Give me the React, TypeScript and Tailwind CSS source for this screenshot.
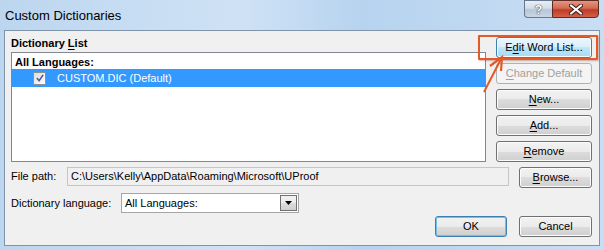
const font = "font-['Liberation_Sans',Arial,sans-serif]";

const btnBase =
  "flex items-center justify-center rounded-[3px] border text-[11px] leading-none";
const btnNormal =
  "border-[#707070] bg-[linear-gradient(#f2f2f2_0%,#ebebeb_50%,#dddddd_50%,#cfcfcf_100%)] shadow-[inset_0_0_0_1px_#fcfcfc] text-black";
const btnHot =
  "border-[#3c7fb1] bg-[linear-gradient(#eaf6fd_0%,#d9f0fc_50%,#bee6fd_50%,#a7d9f5_100%)] shadow-[inset_0_0_0_1px_#fcfcfc] text-black";
const btnDefault =
  "border-[#3c7fb1] bg-[linear-gradient(#f2f2f2_0%,#ebebeb_50%,#dddddd_50%,#cfcfcf_100%)] shadow-[inset_0_0_0_1px_#70c0e7] text-black";
const btnDisabled = "border-[#adb2b5] bg-[#f4f4f4] text-[#a0a0a0]";

function Btn({
  children,
  cls,
  kind = "normal",
}: {
  children: React.ReactNode;
  cls: string;
  kind?: "normal" | "hot" | "default" | "disabled";
}) {
  const k =
    kind === "hot" ? btnHot : kind === "default" ? btnDefault : kind === "disabled" ? btnDisabled : btnNormal;
  return <div className={`${btnBase} ${k} ${cls}`}>{children}</div>;
}

function U({ children }: { children: React.ReactNode }) {
  return <span className="underline underline-offset-[2px]">{children}</span>;
}

function Checkbox() {
  return (
    <div className="flex h-[13px] w-[13px] items-center justify-center border border-[#8f8f8f] bg-[linear-gradient(135deg,#dcdcdc,#ffffff)]">
      <svg width="8" height="8" viewBox="0 0 9 9">
        <path d="M1 4.5 L3.5 7.5 L8 1" fill="none" stroke="#4a5c96" strokeWidth="1.8" />
      </svg>
    </div>
  );
}

export default function App() {
  return (
    <div className={`relative flex h-[250px] w-[604px] flex-col bg-[linear-gradient(90deg,#bcd6ef_0%,#cfe2f5_40%,#b7d3ef_60%,#c9def3_100%)] ${font}`}>
      {/* title bar */}
      <div className="flex h-[30px] shrink-0">
        <div className="pl-[5px] pt-[8px] text-[13px] leading-[15px] text-black">Custom Dictionaries</div>
        <div className="ml-auto mr-[5px] flex self-start">
          <div className="flex h-[18px] w-[28px] items-center justify-center rounded-bl-[4px] border border-r-0 border-[#66778f] bg-[linear-gradient(#e9eef5_0%,#d3dde9_45%,#b7c6d8_55%,#c9d6e5_100%)] text-[13px] font-bold leading-none text-white [text-shadow:0_0_1px_#222,0_0_1px_#222]">
            ?
          </div>
          <div className="flex h-[18px] w-[47px] items-center justify-center rounded-br-[4px] border border-[#5e2a22] bg-[linear-gradient(#e39684_0%,#d26a52_45%,#c03c25_55%,#d2604a_100%)]">
            <svg width="14" height="11" viewBox="0 0 14 11">
              <path d="M2 1.5 L12 9.5 M12 1.5 L2 9.5" stroke="#3a1a14" strokeWidth="4" strokeLinecap="round" />
              <path d="M2 1.5 L12 9.5 M12 1.5 L2 9.5" stroke="#ffffff" strokeWidth="2.2" strokeLinecap="round" />
            </svg>
          </div>
        </div>
      </div>

      {/* client area */}
      <div className="mx-[4px] flex h-[216px] flex-col border border-[#7f93aa] bg-[#f0f0f0] pl-[6px] pr-[7px] text-[11px] text-black">
        <div className="flex gap-[10px]">
          <div className="flex w-[475px] flex-col">
            <div className="h-[21px] pt-[5px] font-bold leading-[14px]">
              Dictionary <U>L</U>ist
            </div>
            <div className="h-[110px] border border-[#828790] bg-white">
              <div className="h-[16px] pl-[3px] pt-[2px] font-bold leading-[14px]">All Languages:</div>
              <div className="flex h-[18px] items-center bg-[#3399ff] pl-[21px] text-white">
                <Checkbox />
                <span className="ml-[11px]">CUSTOM.DIC (Default)</span>
              </div>
            </div>
          </div>
          <div className="flex w-[96px] flex-col gap-[5px] pt-[6px]">
            <Btn cls="h-[21px]" kind="hot">
              E<U>d</U>it Word List...
            </Btn>
            <Btn cls="h-[21px]" kind="disabled">
              <U>C</U>hange Default
            </Btn>
            <Btn cls="h-[21px]">
              <U>N</U>ew...
            </Btn>
            <Btn cls="h-[21px]">
              <U>A</U>dd...
            </Btn>
            <Btn cls="h-[21px]">
              <U>R</U>emove
            </Btn>
          </div>
        </div>

        <div className="mt-[5px] flex items-start">
          <div className="flex h-[19px] w-[56px] items-center">File path:</div>
          <div className="flex h-[19px] w-[442px] items-center border border-[#c3c6cb] bg-[#f0f0f0] pl-[3px]">
            C:\Users\Kelly\AppData\Roaming\Microsoft\UProof
          </div>
          <Btn cls="ml-[10px] h-[21px] w-[73px]">
            <U>B</U>rowse...
          </Btn>
        </div>

        <div className="mt-[5px] flex items-center">
          <div className="w-[110px]">Dictionary language:</div>
          <div className="flex h-[20px] w-[178px] items-center border border-[#a5a5a5] bg-white pl-[3px]">
            <span>All Languages:</span>
            <div className="ml-auto mr-[1px] flex h-[16px] w-[17px] items-center justify-center border border-[#707070] bg-[linear-gradient(#f2f2f2_0%,#ebebeb_50%,#dddddd_50%,#cfcfcf_100%)]">
              <svg width="7" height="4" viewBox="0 0 7 4">
                <path d="M0 0 H7 L3.5 4 Z" fill="#000" />
              </svg>
            </div>
          </div>
        </div>

        <div className="mt-[3px] flex justify-end gap-[12px]">
          <Btn cls="h-[21px] w-[72px]" kind="default">
            OK
          </Btn>
          <Btn cls="h-[21px] w-[73px]">Cancel</Btn>
        </div>
      </div>

      {/* annotation overlay */}
      <div className="pointer-events-none absolute left-[478px] top-[35px] h-[25px] w-[120px] rounded-[1px] border-2 border-[#e35a2a] shadow-[1px_1px_2px_rgba(120,40,10,0.35)]" />
      <svg className="pointer-events-none absolute left-[478px] top-[54px]" width="30" height="42" viewBox="0 0 30 42">
        <path d="M6 38 L23 5" stroke="#e35a2a" strokeWidth="2" fill="none" />
        <path d="M12 12 L24 3 L23 17" stroke="#e35a2a" strokeWidth="2.2" fill="none" strokeLinejoin="miter" />
      </svg>
    </div>
  );
}
